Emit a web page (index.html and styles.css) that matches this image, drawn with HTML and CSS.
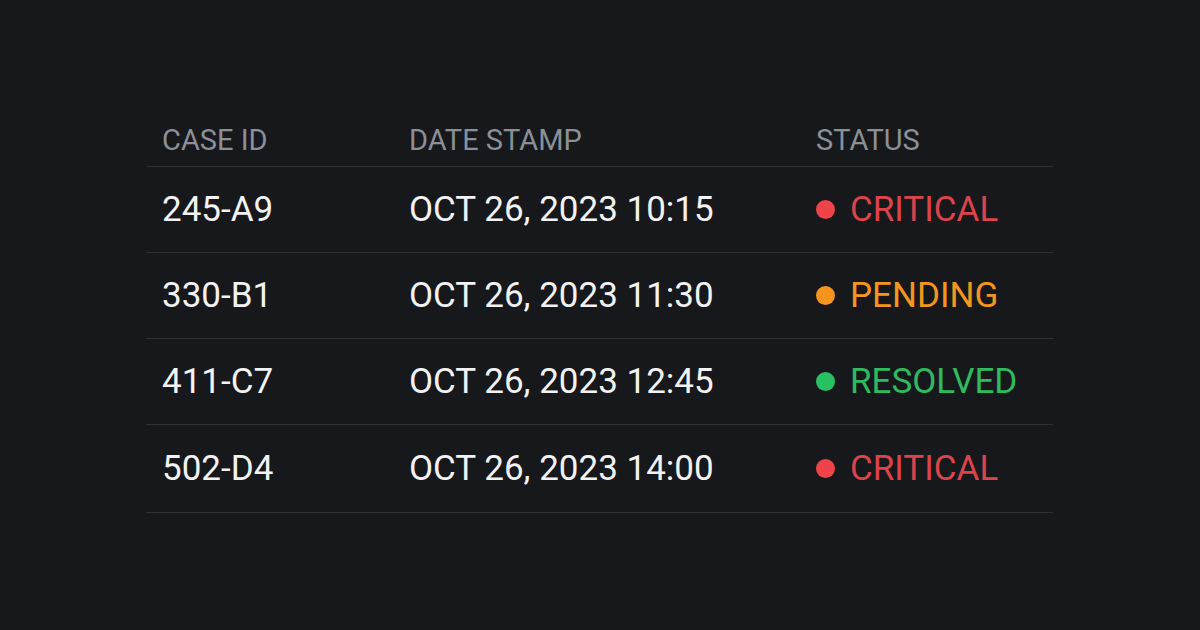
FILE: index.html
```html
<!DOCTYPE html>
<html lang="en">
<head>
    <meta charset="UTF-8">
    <meta name="viewport" content="width=device-width, initial-scale=1.0">
    <title>Case Log</title>
    <link rel="stylesheet" href="styles.css">
</head>
<body>
    <div class="container">
        <table class="cases">
            <thead>
                <tr>
                    <th class="col-id">CASE ID</th>
                    <th class="col-date">DATE STAMP</th>
                    <th class="col-status">STATUS</th>
                </tr>
            </thead>
            <tbody>
                <tr>
                    <td>245-A9</td>
                    <td>OCT 26, 2023 10:15</td>
                    <td><span class="status critical"><span class="dot"></span>CRITICAL</span></td>
                </tr>
                <tr>
                    <td>330-B1</td>
                    <td>OCT 26, 2023 11:30</td>
                    <td><span class="status pending"><span class="dot"></span>PENDING</span></td>
                </tr>
                <tr>
                    <td>411-C7</td>
                    <td>OCT 26, 2023 12:45</td>
                    <td><span class="status resolved"><span class="dot"></span>RESOLVED</span></td>
                </tr>
                <tr class="last">
                    <td>502-D4</td>
                    <td>OCT 26, 2023 14:00</td>
                    <td><span class="status critical"><span class="dot"></span>CRITICAL</span></td>
                </tr>
            </tbody>
        </table>
    </div>
</body>
</html>
```

FILE: styles.css
```css
* {
    margin: 0;
    padding: 0;
    box-sizing: border-box;
    font-family: 'Roboto', 'Inter', sans-serif;
}

body {
    background: #16181c;
    min-height: 100vh;
    padding-top: 114px;
}

.container {
    width: 907px;
    margin-left: 146px;
}

.cases {
    width: 100%;
    border-collapse: collapse;
}

.cases th {
    text-align: left;
    font-weight: 400;
    font-size: 29px;
    color: #8b9097;
    padding: 0 16px;
    height: 52px;
    border-bottom: 1px solid #2e3135;
}

.col-id {
    width: 247px;
}

.col-date {
    width: 407px;
}

.cases td {
    height: 86px;
    padding: 0 16px;
    font-size: 35px;
    color: #f2f2f3;
    border-bottom: 1px solid #2e3135;
}

.cases .last td {
    height: 88px;
}

.status {
    display: flex;
    align-items: center;
    gap: 15px;
}

.dot {
    width: 19px;
    height: 19px;
    border-radius: 50%;
}

.critical {
    color: #dc444b;
}

.critical .dot {
    background: #ef4349;
}

.pending {
    color: #f2961e;
}

.pending .dot {
    background: #f7941d;
}

.resolved {
    color: #2fba5f;
}

.resolved .dot {
    background: #27c161;
}
```
